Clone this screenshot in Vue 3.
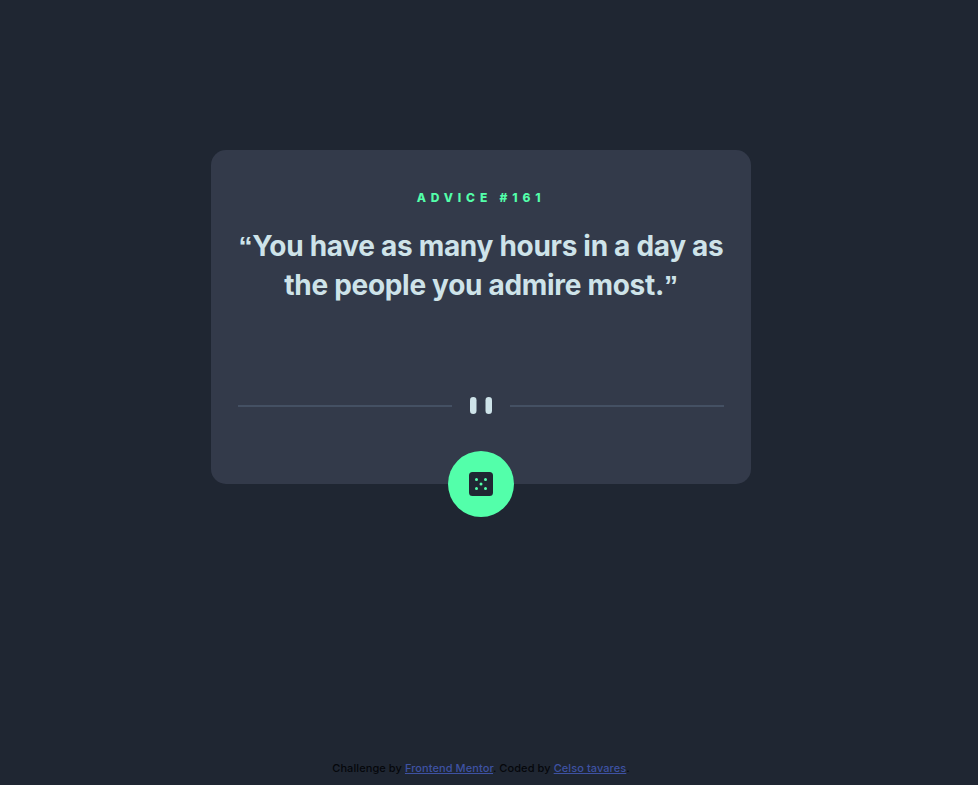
<script setup>
const advice = {
  id: 161,
  text: 'You have as many hours in a day as the people you admire most.',
}
</script>

<template>
  <div class="page">
    <main class="main">
      <section class="card">
        <h1 class="label">Advice #{{ advice.id }}</h1>
        <p class="quote"><span class="mark">“</span>{{ advice.text }}<span class="mark">”</span></p>
        <div class="divider">
          <span class="rule"></span>
          <svg class="pause" width="22" height="17" viewBox="0 0 22 17" aria-hidden="true">
            <rect x="0" y="0" width="6.5" height="17" rx="3.25" />
            <rect x="15.5" y="0" width="6.5" height="17" rx="3.25" />
          </svg>
          <span class="rule"></span>
        </div>
        <button class="dice" type="button" aria-label="New advice">
          <svg width="24" height="24" viewBox="0 0 24 24" aria-hidden="true">
            <path class="face" d="M3.5 0h17a3.5 3.5 0 0 1 3.5 3.5v17a3.5 3.5 0 0 1-3.5 3.5h-17a3.5 3.5 0 0 1-3.5-3.5v-17a3.5 3.5 0 0 1 3.5-3.5Z" />
            <circle class="pip" cx="7.5" cy="7.5" r="1.5" />
            <circle class="pip" cx="16.5" cy="7.5" r="1.5" />
            <circle class="pip" cx="12" cy="12" r="1.5" />
            <circle class="pip" cx="7.5" cy="16.5" r="1.5" />
            <circle class="pip" cx="16.5" cy="16.5" r="1.5" />
          </svg>
        </button>
      </section>
    </main>
    <footer class="attribution">
      Challenge by <a href="#">Frontend Mentor</a>. Coded by <a href="#">Celso tavares</a>.
    </footer>
  </div>
</template>

<style>
html, body { margin: 0; background: #1f2632; }
</style>

<style scoped>
.page {
  box-sizing: border-box;
  height: 785px;
  width: 962px;
  display: flex;
  flex-direction: column;
  font-family: Inter, "Noto Sans", sans-serif;
}
.main {
  flex: 1;
  display: flex;
  justify-content: center;
  padding-top: 150px;
}
.card {
  position: relative;
  box-sizing: border-box;
  width: 540px;
  height: 334px;
  padding: 40px 27px 0;
  background: #333a4a;
  border-radius: 15px;
  text-align: center;
}
.label {
  margin: 0;
  font-size: 12px;
  line-height: 16px;
  font-weight: 800;
  letter-spacing: 4.85px;
  text-transform: uppercase;
  color: #53ffaa;
}
.quote {
  margin: 21px 0 0;
  height: 90px;
  font-size: 28px;
  line-height: 38px;
  font-weight: 700;
  letter-spacing: -0.3px;
  color: #cee3e9;
}
.mark { font-family: "Liberation Sans", sans-serif; }
.divider {
  margin-top: 80px;
  display: flex;
  align-items: center;
  gap: 18px;
}
.rule {
  flex: 1;
  height: 2px;
  background: #445063;
}
.pause { fill: #cee3e9; display: block; }
.dice {
  position: absolute;
  left: 50%;
  bottom: -33px;
  width: 66px;
  height: 66px;
  margin-left: -33px;
  padding: 0;
  border: 0;
  border-radius: 50%;
  background: #53ffaa;
  display: flex;
  align-items: center;
  justify-content: center;
  cursor: pointer;
}
.face { fill: #202733; }
.pip { fill: #53ffaa; }
.attribution {
  height: 17px;
  margin-bottom: 8px;
  font-size: 11px;
  line-height: 17px;
  font-weight: 500;
  letter-spacing: 0.08px;
  text-align: center;
  color: #05070b;
}
.attribution a { color: #3e52a3; }
</style>
